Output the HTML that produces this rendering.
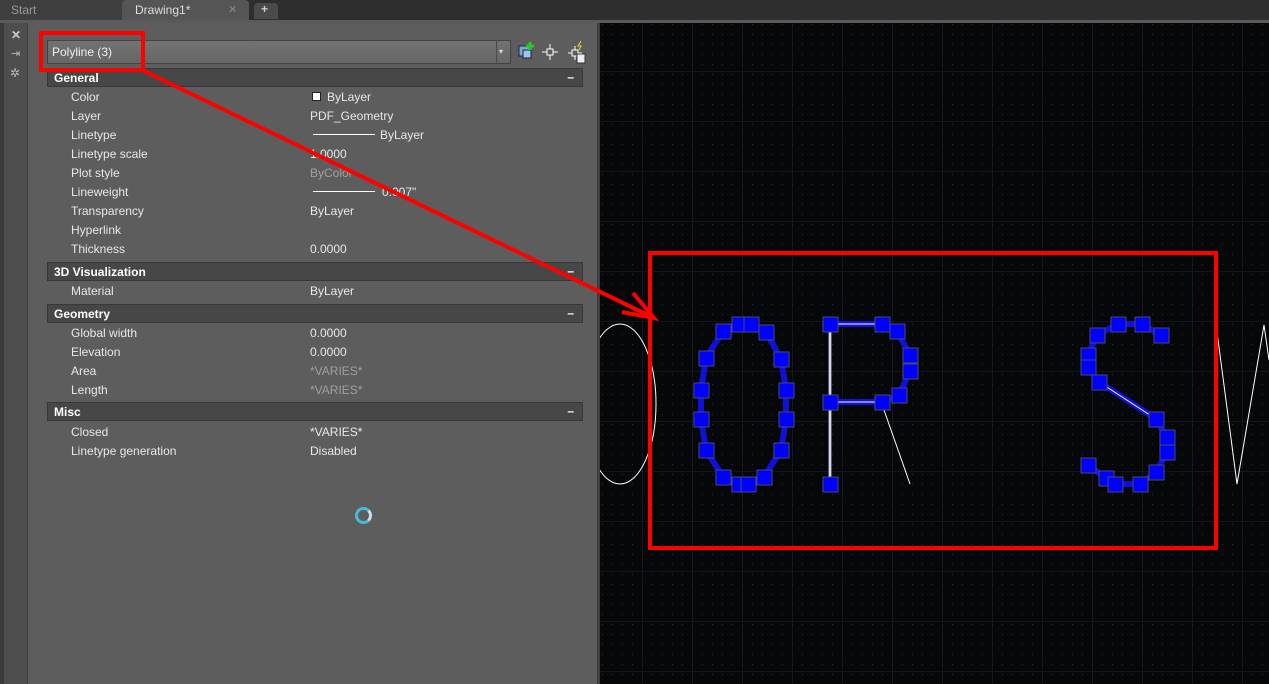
<!DOCTYPE html>
<html><head><meta charset="utf-8"><style>
*{margin:0;padding:0;box-sizing:border-box}
body{width:1269px;height:684px;overflow:hidden;background:#060709;font-family:"Liberation Sans",sans-serif;font-size:12px;position:relative}
.a{position:absolute}
.t{position:absolute;color:#e8e8e8;white-space:nowrap;line-height:14px}
.g{color:#a0a0a0}
.h{position:absolute;left:47px;width:536px;height:19px;background:#474747;border:1px solid #383838;color:#fff;font-weight:bold;padding:2px 0 0 6px;line-height:14px}
.h span{position:absolute;right:8px;top:1px}
</style></head><body>
<div class="a" style="left:0;top:0;width:1269px;height:22px;background:#2e2e2e"></div>
<div class="a" style="left:0;top:0;width:125px;height:20px;background:#3f3f3f"></div>
<div class="t" style="left:11px;top:3px;color:#9a9a9a">Start</div>
<div class="a" style="left:122px;top:0;width:127px;height:20px;background:#555;border-radius:4px 4px 0 0"></div>
<div class="t" style="left:135px;top:3px;color:#ddd">Drawing1*</div>
<div class="t" style="left:228px;top:3px;color:#888;font-size:11px">✕</div>
<div class="a" style="left:254px;top:3px;width:24px;height:16px;background:#4a4a4a;border-radius:4px 4px 0 0"></div>
<div class="t" style="left:261px;top:2px;color:#ccc;font-weight:bold">+</div>
<div class="a" style="left:0;top:20px;width:1269px;height:3px;background:#5a5a5a"></div>
<div class="a" style="left:0;top:23px;width:28px;height:661px;background:#4e4e4e;border-right:1px solid #3e3e3e"></div>
<div class="a" style="left:0;top:23px;width:4px;height:661px;background:#3a3a3a"></div>
<div class="t" style="left:11px;top:28px;color:#ccc;font-weight:bold">✕</div>
<div class="t" style="left:11px;top:47px;color:#bbb;font-size:11px">⇥</div>
<div class="t" style="left:10px;top:66px;color:#bbb;font-size:12px">✲</div>
<div class="a" style="left:28px;top:23px;width:572px;height:661px;background:#5d5d5d;border-right:3px solid #3e3e3e"></div>
<div class="a" style="left:47px;top:40px;width:464px;height:24px;background:linear-gradient(#727272,#666);border:1px solid #444"></div>
<div class="a" style="left:496px;top:41px;width:14px;height:22px;border-left:1px solid #4a4a4a"></div>
<div class="t" style="left:499px;top:45px;color:#ddd;font-size:8px">▾</div>
<div class="t" style="left:52px;top:45px;color:#f0f0f0">Polyline (3)</div>
<svg class="a" style="left:516px;top:40px" width="72" height="24">
<rect x="3" y="6" width="10" height="10" fill="#7aa8d8" stroke="#223" stroke-width="1"/><rect x="7" y="10" width="8" height="8" fill="#9cc4ee" stroke="#223"/><path d="M14 2v8M10 6h8" stroke="#2c2" stroke-width="3"/>
<path d="M34 4v16M26 12h16" stroke="#fff" stroke-width="1"/><rect x="31" y="9" width="6" height="6" fill="#5d5d5d" stroke="#fff"/>
<path d="M59 6v14M52 13h14" stroke="#fff"/><rect x="56" y="10" width="6" height="6" fill="#5d5d5d" stroke="#fff"/><path d="M65 1l-3 5h3l-2 4" stroke="#fc3" fill="none"/><rect x="61" y="14" width="8" height="9" fill="#eee" stroke="#333"/>
</svg>
<div class="h" style="top:68px">General<span>–</span></div>
<div class="t" style="left:71px;top:90px">Color</div>
<div class="a" style="left:312px;top:92px;width:9px;height:9px;background:#fff;border:1px solid #222"></div>
<div class="t" style="left:327px;top:90px">ByLayer</div>
<div class="t" style="left:71px;top:109px">Layer</div><div class="t" style="left:310px;top:109px">PDF_Geometry</div>
<div class="t" style="left:71px;top:128px">Linetype</div>
<div class="a" style="left:313px;top:134px;width:62px;height:1px;background:#fff"></div>
<div class="t" style="left:380px;top:128px">ByLayer</div>
<div class="t" style="left:71px;top:147px">Linetype scale</div><div class="t" style="left:310px;top:147px">1.0000</div>
<div class="t" style="left:71px;top:166px">Plot style</div><div class="t g" style="left:310px;top:166px">ByColor</div>
<div class="t" style="left:71px;top:185px">Lineweight</div>
<div class="a" style="left:313px;top:191px;width:62px;height:1px;background:#fff"></div>
<div class="t" style="left:382px;top:185px">0.007"</div>
<div class="t" style="left:71px;top:204px">Transparency</div><div class="t" style="left:310px;top:204px">ByLayer</div>
<div class="t" style="left:71px;top:223px">Hyperlink</div>
<div class="t" style="left:71px;top:242px">Thickness</div><div class="t" style="left:310px;top:242px">0.0000</div>
<div class="h" style="top:262px">3D Visualization<span>–</span></div>
<div class="t" style="left:71px;top:284px">Material</div><div class="t" style="left:310px;top:284px">ByLayer</div>
<div class="h" style="top:304px">Geometry<span>–</span></div>
<div class="t" style="left:71px;top:326px">Global width</div><div class="t" style="left:310px;top:326px">0.0000</div>
<div class="t" style="left:71px;top:345px">Elevation</div><div class="t" style="left:310px;top:345px">0.0000</div>
<div class="t" style="left:71px;top:364px">Area</div><div class="t g" style="left:310px;top:364px">*VARIES*</div>
<div class="t" style="left:71px;top:383px">Length</div><div class="t g" style="left:310px;top:383px">*VARIES*</div>
<div class="h" style="top:402px">Misc<span>–</span></div>
<div class="t" style="left:71px;top:425px">Closed</div><div class="t" style="left:310px;top:425px">*VARIES*</div>
<div class="t" style="left:71px;top:444px">Linetype generation</div><div class="t" style="left:310px;top:444px">Disabled</div>
<div class="a" style="left:355px;top:507px;width:17px;height:17px;border-radius:50%;border:3px solid #4ab8d8;border-right-color:#cde"></div>
<svg class="a" style="left:0;top:0" width="1269" height="684">
<defs>
<pattern id="dots" x="600" y="22" width="10" height="10" patternUnits="userSpaceOnUse"><rect x="2" y="2" width="1" height="1" fill="#2a2b30"/></pattern>
<pattern id="grid" x="593" y="22" width="50" height="50" patternUnits="userSpaceOnUse"><path d="M50 0V50M0 50H50" stroke="#22232a" stroke-width="1" fill="none"/></pattern>
<clipPath id="cv"><rect x="600" y="23" width="669" height="661"/></clipPath>
</defs>
<g clip-path="url(#cv)">
<rect x="600" y="23" width="669" height="661" fill="url(#dots)"/>
<rect x="600" y="23" width="669" height="661" fill="url(#grid)"/>
<ellipse cx="620" cy="404" rx="36" ry="80" fill="none" stroke="#fff" stroke-width="1"/>
<path d="M1217 332L1237 484L1264 325L1269 360" stroke="#fff" fill="none"/>
<path d="M884 410L910 484" stroke="#fff"/>
<g stroke="#1010d8" stroke-width="6" fill="none">
<path d="M723 331L739 324L751 324L766 332L781 359L786 390L786 419L781 450L764 477L748 484L739 484L723 477L706 450L701 419L701 390L706 358Z"/>
<path d="M1161 335L1142 324L1118 324L1097 335L1088 355L1088 367L1099 382L1127 400L1156 419L1167 437L1167 452L1156 472L1140 484L1115 484L1106 478L1088 465"/>
<path d="M830 324H882L897 331L910 355L910 371L899 395L882 402H830"/>
</g>
<path d="M830 324V484" stroke="#aac" stroke-width="3"/>
<path d="M830 324V484M830 324H882M830 402H882M1099 382L1156 419" stroke="#fff" stroke-width="1"/>
<g fill="#0000ff" stroke="#4a4a6a" stroke-width="1">
<rect x="716" y="324" width="15" height="15"/><rect x="732" y="317" width="15" height="15"/><rect x="744" y="317" width="15" height="15"/><rect x="759" y="325" width="15" height="15"/><rect x="699" y="351" width="15" height="15"/><rect x="774" y="352" width="15" height="15"/><rect x="694" y="383" width="15" height="15"/><rect x="779" y="383" width="15" height="15"/><rect x="694" y="412" width="15" height="15"/><rect x="779" y="412" width="15" height="15"/><rect x="699" y="443" width="15" height="15"/><rect x="774" y="443" width="15" height="15"/><rect x="716" y="470" width="15" height="15"/><rect x="732" y="477" width="15" height="15"/><rect x="741" y="477" width="15" height="15"/><rect x="757" y="470" width="15" height="15"/>
<rect x="823" y="317" width="15" height="15"/><rect x="875" y="317" width="15" height="15"/><rect x="890" y="324" width="15" height="15"/><rect x="903" y="348" width="15" height="15"/><rect x="903" y="364" width="15" height="15"/><rect x="892" y="388" width="15" height="15"/><rect x="875" y="395" width="15" height="15"/><rect x="823" y="395" width="15" height="15"/><rect x="823" y="477" width="15" height="15"/>
<rect x="1090" y="328" width="15" height="15"/><rect x="1111" y="317" width="15" height="15"/><rect x="1135" y="317" width="15" height="15"/><rect x="1154" y="328" width="15" height="15"/><rect x="1081" y="348" width="15" height="15"/><rect x="1081" y="360" width="15" height="15"/><rect x="1092" y="375" width="15" height="15"/><rect x="1149" y="412" width="15" height="15"/><rect x="1160" y="430" width="15" height="15"/><rect x="1160" y="445" width="15" height="15"/><rect x="1149" y="465" width="15" height="15"/><rect x="1081" y="458" width="15" height="15"/><rect x="1099" y="471" width="15" height="15"/><rect x="1108" y="477" width="15" height="15"/><rect x="1133" y="477" width="15" height="15"/>
</g>
</g>
<g stroke="#ff0000" fill="none" stroke-width="4">
<rect x="41" y="33" width="102" height="37"/>
<rect x="650" y="253" width="566" height="295"/>
<path d="M142 70L650 316"/>
<path d="M622 312L654 318L633 293"/>
</g>
</svg>
</body></html>
